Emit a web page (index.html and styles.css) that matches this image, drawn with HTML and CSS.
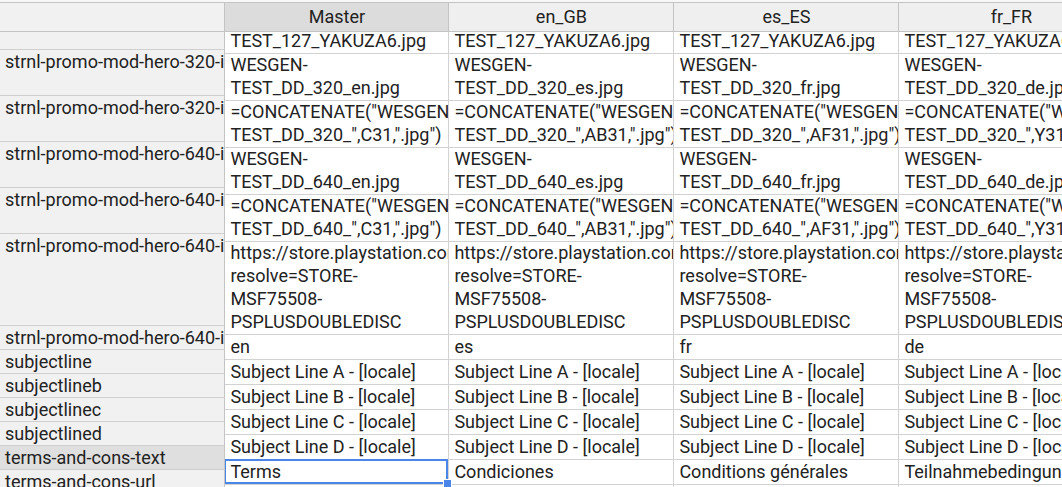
FILE: index.html
```html
<!DOCTYPE html>
<html>
<head>
<meta charset="utf-8">
<link rel="stylesheet" href="styles.css">
</head>
<body>
<div class="strip"></div>
<div class="sheet">
  <div class="frozen">
    <div class="corner"></div>
    <div class="rh r-cut"></div>
    <div class="rh r-two">strnl-promo-mod-hero-320-i</div>
    <div class="rh r-two">strnl-promo-mod-hero-320-i</div>
    <div class="rh r-two">strnl-promo-mod-hero-640-i</div>
    <div class="rh r-two">strnl-promo-mod-hero-640-i</div>
    <div class="rh r-four">strnl-promo-mod-hero-640-i</div>
    <div class="rh r-one">strnl-promo-mod-hero-640-i</div>
    <div class="rh r-one">subjectline</div>
    <div class="rh r-one">subjectlineb</div>
    <div class="rh r-one">subjectlinec</div>
    <div class="rh r-one">subjectlined</div>
    <div class="rh r-one sel">terms-and-cons-text</div>
    <div class="rh r-one">terms-and-cons-url</div>
  </div>
  <div class="grid">
    <div class="ch sel">Master</div>
    <div class="ch">en_GB</div>
    <div class="ch">es_ES</div>
    <div class="ch">fr_FR</div>

    <div class="c"><span>TEST_127_YAKUZA6.jpg</span></div>
    <div class="c"><span>TEST_127_YAKUZA6.jpg</span></div>
    <div class="c"><span>TEST_127_YAKUZA6.jpg</span></div>
    <div class="c"><span>TEST_127_YAKUZA6.jpg</span></div>

    <div class="c"><span>WESGEN-</span><span>TEST_DD_320_en.jpg</span></div>
    <div class="c"><span>WESGEN-</span><span>TEST_DD_320_es.jpg</span></div>
    <div class="c"><span>WESGEN-</span><span>TEST_DD_320_fr.jpg</span></div>
    <div class="c"><span>WESGEN-</span><span>TEST_DD_320_de.jpg</span></div>

    <div class="c"><span>=CONCATENATE("WESGEN-</span><span>TEST_DD_320_",C31,".jpg")</span></div>
    <div class="c"><span>=CONCATENATE("WESGEN-</span><span>TEST_DD_320_",AB31,".jpg")</span></div>
    <div class="c"><span>=CONCATENATE("WESGEN-</span><span>TEST_DD_320_",AF31,".jpg")</span></div>
    <div class="c"><span>=CONCATENATE("WESGEN-</span><span>TEST_DD_320_",Y31,".jpg")</span></div>

    <div class="c"><span>WESGEN-</span><span>TEST_DD_640_en.jpg</span></div>
    <div class="c"><span>WESGEN-</span><span>TEST_DD_640_es.jpg</span></div>
    <div class="c"><span>WESGEN-</span><span>TEST_DD_640_fr.jpg</span></div>
    <div class="c"><span>WESGEN-</span><span>TEST_DD_640_de.jpg</span></div>

    <div class="c"><span>=CONCATENATE("WESGEN-</span><span>TEST_DD_640_",C31,".jpg")</span></div>
    <div class="c"><span>=CONCATENATE("WESGEN-</span><span>TEST_DD_640_",AB31,".jpg")</span></div>
    <div class="c"><span>=CONCATENATE("WESGEN-</span><span>TEST_DD_640_",AF31,".jpg")</span></div>
    <div class="c"><span>=CONCATENATE("WESGEN-</span><span>TEST_DD_640_",Y31,".jpg")</span></div>

    <div class="c"><span>https://store.playstation.com/?</span><span>resolve=STORE-</span><span>MSF75508-</span><span>PSPLUSDOUBLEDISC</span></div>
    <div class="c"><span>https://store.playstation.com/?</span><span>resolve=STORE-</span><span>MSF75508-</span><span>PSPLUSDOUBLEDISC</span></div>
    <div class="c"><span>https://store.playstation.com/?</span><span>resolve=STORE-</span><span>MSF75508-</span><span>PSPLUSDOUBLEDISC</span></div>
    <div class="c"><span>https://store.playstation.com/?</span><span>resolve=STORE-</span><span>MSF75508-</span><span>PSPLUSDOUBLEDISC</span></div>

    <div class="c"><span>en</span></div>
    <div class="c"><span>es</span></div>
    <div class="c"><span>fr</span></div>
    <div class="c"><span>de</span></div>

    <div class="c"><span>Subject Line A - [locale]</span></div>
    <div class="c"><span>Subject Line A - [locale]</span></div>
    <div class="c"><span>Subject Line A - [locale]</span></div>
    <div class="c"><span>Subject Line A - [locale]</span></div>

    <div class="c"><span>Subject Line B - [locale]</span></div>
    <div class="c"><span>Subject Line B - [locale]</span></div>
    <div class="c"><span>Subject Line B - [locale]</span></div>
    <div class="c"><span>Subject Line B - [locale]</span></div>

    <div class="c"><span>Subject Line C - [locale]</span></div>
    <div class="c"><span>Subject Line C - [locale]</span></div>
    <div class="c"><span>Subject Line C - [locale]</span></div>
    <div class="c"><span>Subject Line C - [locale]</span></div>

    <div class="c"><span>Subject Line D - [locale]</span></div>
    <div class="c"><span>Subject Line D - [locale]</span></div>
    <div class="c"><span>Subject Line D - [locale]</span></div>
    <div class="c"><span>Subject Line D - [locale]</span></div>

    <div class="c active"><span>Terms</span></div>
    <div class="c"><span>Condiciones</span></div>
    <div class="c"><span>Conditions générales</span></div>
    <div class="c"><span>Teilnahmebedingungen</span></div>

    <div class="c"></div>
    <div class="c"></div>
    <div class="c"></div>
    <div class="c"></div>
  </div>
</div>
</body>
</html>
```
FILE: styles.css
```css
* { box-sizing: border-box; }
html, body {
  margin: 0;
  padding: 0;
  width: 1062px;
  height: 487px;
  overflow: hidden;
  background: #ffffff;
  font-family: Roboto, "Liberation Sans", sans-serif;
  font-size: 18px;
  color: #222222;
}
.strip {
  height: 3px;
  background: #f8f8f8;
  border-bottom: 1px solid #c4c4c4;
}
.sheet {
  display: flex;
  align-items: flex-start;
}
.frozen {
  flex: 0 0 225px;
  display: flex;
  flex-direction: column;
  background: #f1f1f1;
}
.corner {
  height: 29px;
  border-right: 1px solid #c4c4c4;
  border-bottom: 1px solid #c4c4c4;
  background: #f1f1f1;
}
.rh {
  border-right: 1px solid #c4c4c4;
  border-bottom: 1px solid #cfcfcf;
  padding: 0 0 0 5px;
  line-height: 23px;
  white-space: nowrap;
  overflow: hidden;
}
.rh.sel { background: #dfdfdf; }
.r-cut { height: 18px; }
.r-two { height: 46px; }
.r-four { height: 92px; }
.r-one { height: 24px; }

.grid {
  flex: 1 1 auto;
  overflow: hidden;
  display: grid;
  grid-template-columns: 224px 225px 225px 225px;
  grid-template-rows: 29px 22px 47px 47px 47px 47px 93px 25px 25px 25px 25px 25px 25px 25px;
}
.ch {
  background: #efefef;
  border-right: 1px solid #c4c4c4;
  border-bottom: 1px solid #c4c4c4;
  display: flex;
  align-items: center;
  justify-content: center;
  padding-bottom: 2px;
}
.ch.sel { background: #dcdcdc; }
.c {
  position: relative;
  border-right: 1px solid #d2d2d2;
  border-bottom: 1px solid #d2d2d2;
  display: flex;
  flex-direction: column;
  justify-content: flex-end;
  padding: 0 0 1px 5px;
  line-height: 23px;
  white-space: nowrap;
  overflow: hidden;
}
.c span { display: block; }
.c.active { overflow: visible; }
.c.active::after {
  content: "";
  position: absolute;
  top: -1px;
  left: -1px;
  right: 0;
  bottom: 0;
  border: 2px solid #4a86e8;
}
.c.active::before {
  content: "";
  position: absolute;
  right: -4px;
  bottom: -4px;
  width: 7px;
  height: 7px;
  background: #4a86e8;
  border: 1px solid #ffffff;
  z-index: 2;
}
```
